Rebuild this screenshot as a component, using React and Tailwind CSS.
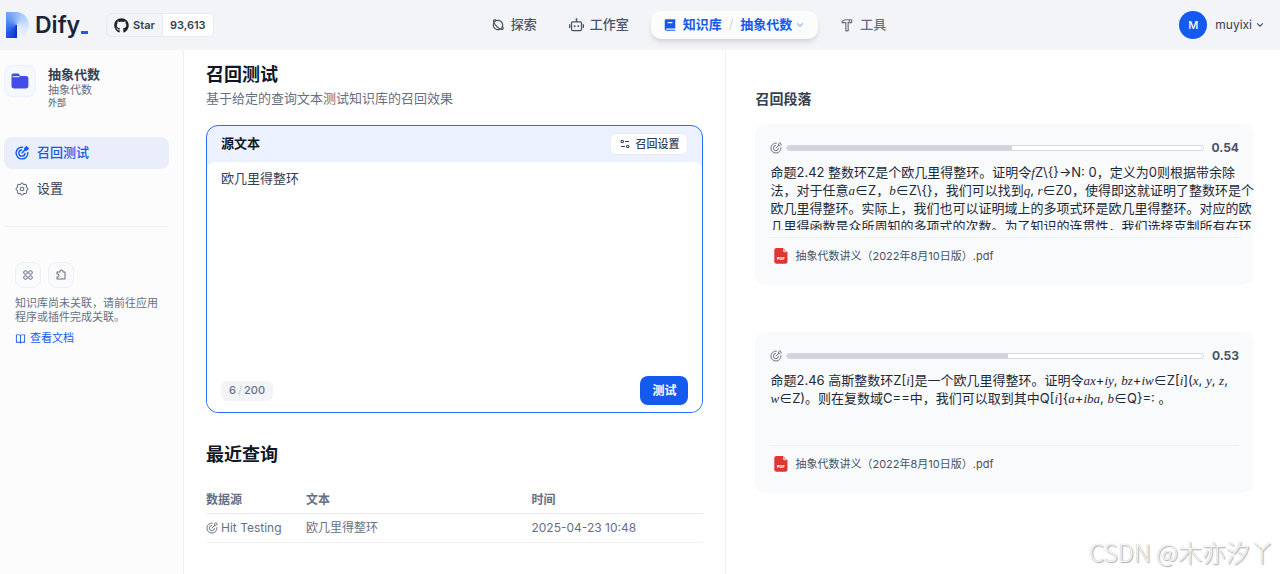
import { useState } from 'react';
import {
  RiPlanetLine,
  RiRobot2Line,
  RiBook2Fill,
  RiHammerLine,
  RiArrowDownSLine,
  RiApps2Line,
  RiPuzzle2Line,
  RiBookOpenLine,
  RiEqualizer2Line,
} from 'react-icons/ri';
import { FaGithub } from 'react-icons/fa';

const MAX_LENGTH = 200;

const records = [{ source: 'Hit Testing', text: '欧几里得整环', time: '2025-04-23 10:48' }];

const Var = ({ children }) => (
  <i className="font-['Liberation_Serif',serif] leading-none italic">{children}</i>
);

const results = [
  {
    score: 0.54,
    file: '抽象代数讲义（2022年8月10日版）.pdf',
    lines: [
      <>命题2.42 整数环Z是个欧几里得整环。证明令<Var>f</Var>Z\{'{}'}→N: 0，定义为0则根据带余除</>,
      <>法，对于任意<Var>a</Var>∈Z，<Var>b</Var>∈Z\{'{}'}，我们可以找到<Var>q</Var>, <Var>r</Var>∈Z0，使得即这就证明了整数环是个</>,
      <>欧几里得整环。实际上，我们也可以证明域上的多项式环是欧几里得整环。对应的欧</>,
      <>几里得函数是众所周知的多项式的次数。为了知识的连贯性，我们选择克制所有在环</>,
    ],
  },
  {
    score: 0.53,
    file: '抽象代数讲义（2022年8月10日版）.pdf',
    lines: [
      <>命题2.46 高斯整数环Z[<Var>i</Var>]是一个欧几里得整环。证明令<Var>ax</Var>+<Var>iy</Var>, <Var>bz</Var>+<Var>iw</Var>∈Z[<Var>i</Var>](<Var>x</Var>, <Var>y</Var>, <Var>z</Var>,</>,
      <><Var>w</Var>∈Z)。则在复数域C==中，我们可以取到其中Q[<Var>i</Var>]{'{'}<Var>a</Var>+<Var>iba</Var>, <Var>b</Var>∈Q{'}'}=: 。</>,
    ],
  },
];

function TargetIcon({ className, filled = false }) {
  return (
    <svg
      viewBox="0 0 16 16"
      className={className}
      fill="none"
      stroke="currentColor"
      strokeWidth={filled ? 1.6 : 1.3}
      strokeLinecap="round"
      strokeLinejoin="round"
    >
      <path d="M8.6 1.4A6.7 6.7 0 1 0 14.6 7.4" />
      <path d="M7.6 4.6A3.5 3.5 0 1 0 11.4 8.4" />
      <path d="M8 8l3.3-3.3" />
      <path
        d="M11.3 4.7V2.7L13.2.8l.6 1.4 1.4.6-1.9 1.9z"
        fill={filled ? 'currentColor' : 'none'}
      />
    </svg>
  );
}

function GearIcon({ className }) {
  return (
    <svg viewBox="0 0 16 16" className={className} fill="none" stroke="currentColor" strokeWidth="1.2" strokeLinejoin="round">
      <path d="M6.6 2.2a1.5 1.5 0 0 1 2.8 0 1.5 1.5 0 0 0 1.7.7 1.5 1.5 0 0 1 2 2 1.5 1.5 0 0 0 .7 1.7 1.5 1.5 0 0 1 0 2.8 1.5 1.5 0 0 0-.7 1.7 1.5 1.5 0 0 1-2 2 1.5 1.5 0 0 0-1.7.7 1.5 1.5 0 0 1-2.8 0 1.5 1.5 0 0 0-1.7-.7 1.5 1.5 0 0 1-2-2 1.5 1.5 0 0 0-.7-1.7 1.5 1.5 0 0 1 0-2.8 1.5 1.5 0 0 0 .7-1.7 1.5 1.5 0 0 1 2-2 1.5 1.5 0 0 0 1.7-.7z" />
      <circle cx="8" cy="8" r="2.1" />
    </svg>
  );
}

function FolderIcon({ className }) {
  return (
    <svg viewBox="0 0 18 16" className={className}>
      <path d="M2.6.5h4.2c.6 0 1.1.3 1.4.8l1 1.7h5.6a2.6 2.6 0 0 1 2.6 2.6v7.2a2.6 2.6 0 0 1-2.6 2.6H3.1A2.6 2.6 0 0 1 .5 12.8V2.6C.5 1.4 1.4.5 2.6.5z" fill="#444ce7" />
      <path d="M1.9 3.7h6.3" stroke="#f5f8ff" strokeWidth="1" strokeLinecap="round" />
    </svg>
  );
}

function PdfIcon() {
  return (
    <svg viewBox="0 0 14 16" className="h-4 w-[14px] shrink-0">
      <path d="M2.5 0H9l4.5 4.3v9.2a2.3 2.3 0 0 1-2.3 2.3H2.5A2.3 2.3 0 0 1 .3 13.5V2.3A2.3 2.3 0 0 1 2.5 0z" fill="#dd3633" />
      <path d="M9 0l4.5 4.3H10.4A1.4 1.4 0 0 1 9 2.9z" fill="#f6b5b3" />
      <text x="6.9" y="11.8" fontSize="4" fontWeight="800" fontFamily="Inter, sans-serif" fill="#fff" textAnchor="middle">
        PDF
      </text>
    </svg>
  );
}

function Logo() {
  return (
    <a href="#" aria-label="Dify" className="flex items-center gap-1.5">
      <span className="h-[26px] w-[23px] rounded-r-[13px] bg-[conic-gradient(from_180deg_at_46%_50%,#0a2fd0_0%,#2a5de6_14%,#4f83f1_28%,#84aefa_45%,#b4d0fd_62%,#dbe8ff_80%,#eff5ff_100%)]" />
      <span className="flex items-end text-[23px]/[26px] font-semibold text-[#1b2537]">
        Dify
        <span className="mb-1 ml-px h-[3px] w-[7px] bg-[#155eef]" />
      </span>
    </a>
  );
}

function Header() {
  return (
    <header className="flex h-[50px] shrink-0 items-center justify-between bg-[#f2f4f7] pr-3.5 pl-1.5">
      <div className="flex items-center gap-[18px]">
        <Logo />
        <a href="#" className="flex h-6 items-center overflow-hidden rounded-md border border-[#e9ebf0] text-[11px] font-semibold text-[#354052]">
          <span className="flex h-full items-center gap-1 px-[7px]">
            <FaGithub className="size-[15px] text-[#1f2328]" />
            Star
          </span>
          <span className="flex h-full items-center border-l border-[#e9ebf0] bg-white px-[7px]">93,613</span>
        </a>
      </div>

      <nav className="mr-4 flex items-center gap-3 text-[13px] font-medium text-[#495464]">
        <a href="#" className="flex h-7 items-center gap-1.5 px-2.5">
          <RiPlanetLine className="size-3.5" />
          探索
        </a>
        <a href="#" className="flex h-7 items-center gap-1.5 px-2.5">
          <RiRobot2Line className="size-[15px]" />
          工作室
        </a>
        <div className="flex h-7 items-center rounded-[10px] bg-[#fcfcfd] px-3 font-semibold text-[#155aef] shadow-md">
          <a href="#" className="flex items-center gap-1.5">
            <RiBook2Fill className="size-3.5" />
            知识库
          </a>
          <span className="px-[7px] font-light text-[#c8ceda]">/</span>
          <button className="flex items-center gap-0.5">
            抽象代数
            <RiArrowDownSLine className="size-3 text-[#84abff]" />
          </button>
        </div>
        <a href="#" className="flex h-7 items-center gap-1.5 px-2.5 text-[#676f83]">
          <RiHammerLine className="size-3.5" />
          工具
        </a>
      </nav>

      <button className="flex items-center gap-2 text-xs text-[#354052]">
        <span className="flex size-7 items-center justify-center rounded-full bg-[#155aef] text-[11px] font-medium text-white">M</span>
        <span className="flex items-center gap-0.5">
          muyixi
          <RiArrowDownSLine className="size-3" />
        </span>
      </button>
    </header>
  );
}

function Sidebar() {
  return (
    <aside className="w-[184px] shrink-0 border-r border-[#f0f1f4] bg-[#fcfcfd] pt-[15px] pr-3.5 pl-1">
      <div className="flex gap-3">
        <div className="flex size-8 items-center justify-center rounded-lg border border-[#eaf0ff] bg-[#f5f8ff]">
          <FolderIcon className="h-4 w-[18px]" />
        </div>
        <div>
          <div className="text-[13px]/[18px] font-semibold text-[#354052]">抽象代数</div>
          <div className="text-[11px]/[14px] text-[#676f83]">抽象代数</div>
          <div className="text-[9px]/[12px] font-medium text-[#676f83]">外部</div>
        </div>
      </div>

      <nav className="mt-7 flex flex-col gap-1 border-b border-[#f0f1f4] pb-[21px] text-[13px]">
        <a href="#" className="flex h-8 items-center gap-2 rounded-lg bg-[#eaeefb] px-[11px] font-medium text-[#155aef]">
          <TargetIcon filled className="size-3.5" />
          召回测试
        </a>
        <a href="#" className="flex h-8 items-center gap-2 px-[11px] text-[#354052]">
          <GearIcon className="size-3.5 text-[#676f83]" />
          设置
        </a>
      </nav>

      <div className="mt-[35px] pl-[11px]">
        <div className="flex gap-[7px] text-[#676f83]">
          <span className="flex size-[26px] items-center justify-center rounded-lg border border-[#eef0f5] bg-[#f9fafb]">
            <RiApps2Line className="size-3" />
          </span>
          <span className="flex size-[26px] items-center justify-center rounded-lg border border-[#eef0f5] bg-[#f9fafb]">
            <RiPuzzle2Line className="size-3 -scale-x-100" />
          </span>
        </div>
        <p className="mt-2 pr-2 text-[11px]/[14px] text-[#676f83]">知识库尚未关联，请前往应用程序或插件完成关联。</p>
        <a href="#" className="mt-[7px] flex items-center gap-1 text-[11px]/[14px] text-[#155aef]">
          <RiBookOpenLine className="size-[11px]" />
          查看文档
        </a>
      </div>
    </aside>
  );
}

function QueryBox() {
  const [query, setQuery] = useState('欧几里得整环');

  return (
    <form
      className="mt-[18px] rounded-xl border border-[#296dff] bg-[#ecf2ff]"
      onSubmit={(e) => e.preventDefault()}
    >
      <div className="flex h-9 items-center justify-between px-3.5">
        <label htmlFor="query" className="text-[13px] font-semibold text-[#101828]">
          源文本
        </label>
        <button type="button" className="flex h-[22px] items-center gap-1 rounded-md border border-[#e9ebf0] bg-white px-2 text-[11px] font-medium text-[#354052]">
          <RiEqualizer2Line className="size-3" />
          召回设置
        </button>
      </div>
      <div className="rounded-t-lg rounded-b-xl bg-white px-3.5 pt-[7px] pb-[7px]">
        <textarea
          id="query"
          value={query}
          maxLength={MAX_LENGTH}
          onChange={(e) => setQuery(e.target.value)}
          className="block h-[207px] w-full resize-none text-[13px]/[18px] text-[#354052] outline-none"
        />
        <div className="flex items-center justify-between">
          <span className="flex h-5 items-center gap-0.5 rounded-md bg-[#f2f4f7] px-2 text-[11px] font-medium text-[#676f83]">
            {query.length}
            <span className="text-[#c8ceda]">/</span>
            {MAX_LENGTH}
          </span>
          <button type="submit" className="h-[29px] rounded-lg bg-[#155aef] px-3 text-xs font-semibold text-white">
            测试
          </button>
        </div>
      </div>
    </form>
  );
}

function HistoryTable() {
  return (
    <table className="mt-[17px] w-full table-fixed text-left text-xs text-[#676f83]">
      <thead>
        <tr className="h-[29px] border-b border-[#e9ebf0]">
          <th className="w-[100px] pt-1 font-semibold">数据源</th>
          <th className="pt-1 font-semibold">文本</th>
          <th className="w-[172px] pt-1 font-semibold">时间</th>
        </tr>
      </thead>
      <tbody>
        {records.map((record) => (
          <tr key={record.time} className="h-[29px] border-b border-[#eef0f4]">
            <td>
              <span className="flex items-center gap-[3px]">
                <TargetIcon className="size-3" />
                {record.source}
              </span>
            </td>
            <td>{record.text}</td>
            <td>{record.time}</td>
          </tr>
        ))}
      </tbody>
    </table>
  );
}

function ResultCard({ result }) {
  return (
    <article className="rounded-[10px] bg-[#f9fafb] px-[15px] pt-[15px] pb-5">
      <div className="flex h-[18px] items-center gap-1">
        <TargetIcon className="size-3 shrink-0 text-[#676f83]" />
        <div className="h-1.5 flex-1 overflow-hidden rounded-full border border-[#d5dae2] bg-white">
          <div className="h-full bg-[#d0d5dd]" style={{ width: `${result.score * 100}%` }} />
        </div>
        <span className="ml-1 text-xs font-bold text-[#495464]">{result.score}</span>
      </div>
      <div className="mt-[6px] -mr-[15px] h-[67px] overflow-hidden text-[13px]/[18px] whitespace-nowrap text-[#1d2939]">
        {result.lines.map((line, i) => (
          <p key={i}>{line}</p>
        ))}
      </div>
      <div className="mt-[7px] flex items-center gap-[7px] border-t border-[#eef0f4] pt-[9px] pl-1 text-[11px]/[18px] text-[#495464]">
        <PdfIcon />
        {result.file}
      </div>
    </article>
  );
}

export default function App() {
  return (
    <div className="relative flex min-h-screen flex-col bg-white font-['Inter','Noto_Sans_CJK_SC',sans-serif]">
      <Header />
      <div className="flex flex-1">
        <Sidebar />
        <main className="grid flex-1 grid-cols-[544fr_552fr]">
          <section className="border-r border-[#f0f1f4] px-[22px] pt-[13px]">
            <h1 className="text-lg/[24px] font-semibold text-[#101828]">召回测试</h1>
            <p className="mt-[2px] text-[13px]/[18px] text-[#676f83]">基于给定的查询文本测试知识库的召回效果</p>
            <QueryBox />
            <h2 className="mt-[30px] text-lg/[24px] font-semibold text-[#101828]">最近查询</h2>
            <HistoryTable />
          </section>
          <section className="pt-10 pr-[26px] pl-[29px]">
            <h2 className="text-sm/[18px] font-semibold text-[#354052]">召回段落</h2>
            <div className="mt-4 flex flex-col gap-[47px]">
              {results.map((result) => (
                <ResultCard key={result.score} result={result} />
              ))}
            </div>
          </section>
        </main>
      </div>
      <div className="absolute right-1.5 bottom-1.5 font-['Noto_Sans_CJK_SC',sans-serif] text-2xl/[32px] font-light text-[#f4f4f4] [text-shadow:1px_1px_1px_#aaa,0_0_1px_#bbb]">
        CSDN @木亦汐丫
      </div>
    </div>
  );
}
